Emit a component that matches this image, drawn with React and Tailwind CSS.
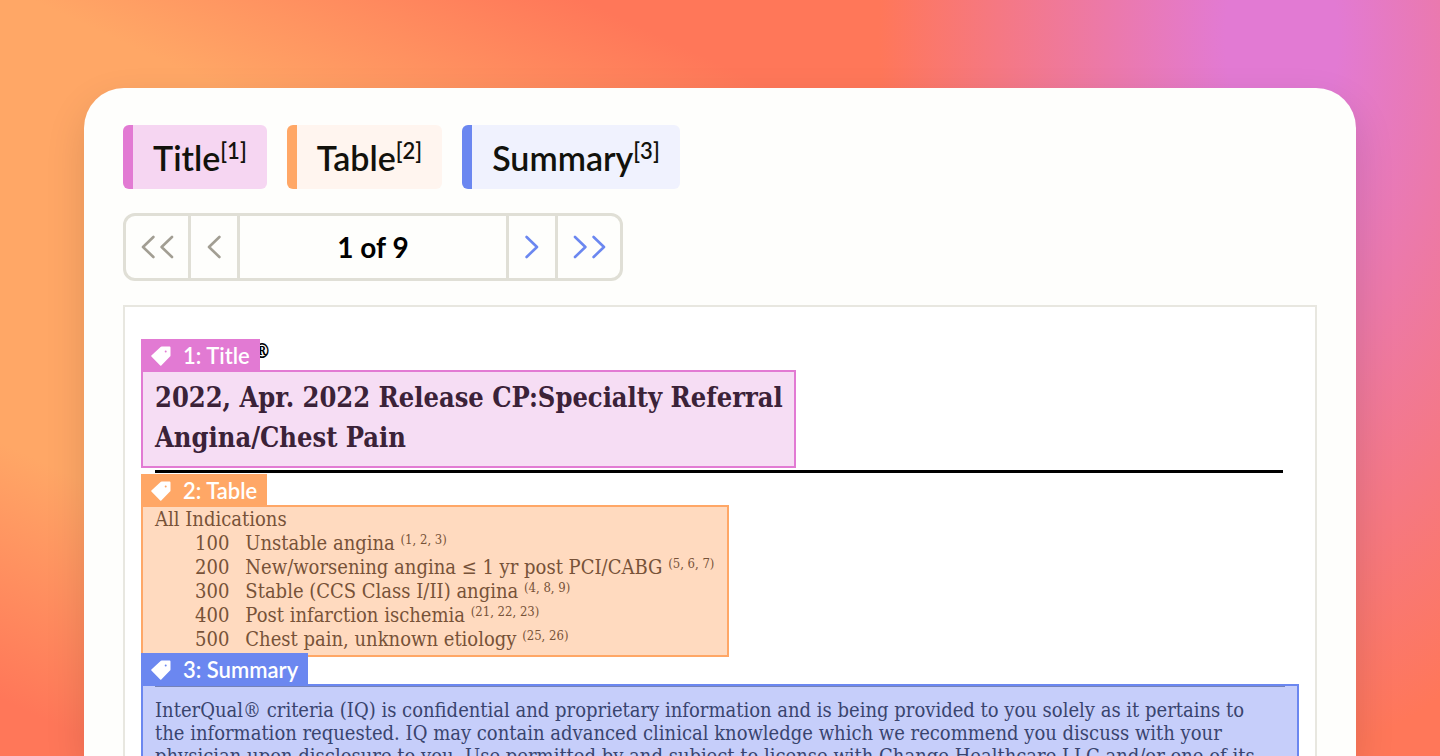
import clsx from "clsx";

const tabs = [
    { id: 1, name: "Title", bar: "border-[#e27ad3]", fill: "bg-[#f6d6f2]" },
    { id: 2, name: "Table", bar: "border-[#ffa766]", fill: "bg-[#fff5ef]" },
    { id: 3, name: "Summary", bar: "border-[#6b87f0]", fill: "bg-[#f0f2fe]" },
];

const indications = [
    { code: 100, text: "Unstable angina", refs: "(1, 2, 3)" },
    {
        code: 200,
        text: "New/worsening angina ≤ 1 yr post PCI/CABG",
        refs: "(5, 6, 7)",
    },
    { code: 300, text: "Stable (CCS Class I/II) angina", refs: "(4, 8, 9)" },
    { code: 400, text: "Post infarction ischemia", refs: "(21, 22, 23)" },
    { code: 500, text: "Chest pain, unknown etiology", refs: "(25, 26)" },
];

const summaryLines = [
    "InterQual® criteria (IQ) is confidential and proprietary information and is being provided to you solely as it pertains to",
    "the information requested. IQ may contain advanced clinical knowledge which we recommend you discuss with your",
    "physician upon disclosure to you. Use permitted by and subject to license with Change Healthcare LLC and/or one of its",
];

function Chevrons({ count = 1, flip = false }) {
    const width = count === 1 ? 14 : 33;
    return (
        <svg
            width={width}
            height="24"
            viewBox={`0 0 ${width} 24`}
            fill="none"
            stroke="currentColor"
            strokeWidth="2.6"
            strokeLinecap="round"
            strokeLinejoin="round"
            className={clsx(flip && "-scale-x-100")}
            aria-hidden="true"
        >
            <path d="M12.4 2 2 12l10.4 10" />
            {count === 2 && <path d="M31 2 20.6 12 31 22" />}
        </svg>
    );
}

function TagLabel({ className, children }) {
    return (
        <div
            className={clsx(
                "absolute bottom-full -left-0.5 flex h-[33px] items-center gap-3 px-2.5 font-[Lato,sans-serif] text-[22px] font-semibold whitespace-nowrap text-white",
                className
            )}
        >
            <svg width="20" height="20" viewBox="0 0 20 20" aria-hidden="true">
                <path
                    fill="currentColor"
                    fillRule="evenodd"
                    d="M9.6 .9a1.6 1.6 0 0 1 1.1-.4h7.9c.5 0 .9.4.9.9v8c0 .4-.2.9-.5 1.2l-8.700 8.800a.8.800 0 0 1-1.100 0L.4 10.500a.7.700 0 0 1 0-1ZM14.700 4.400a1 1 0 1 0 0 2 1 1 0 0 0 0-2Z"
                />
            </svg>
            {children}
        </div>
    );
}

function Pager() {
    return (
        <nav
            aria-label="Pages"
            className="mt-6 flex h-[68px] w-[500px] divide-x-3 divide-[#e0dfd6] rounded-xl border-3 border-[#e0dfd6] text-[#a29e93]"
        >
            <button
                aria-label="First page"
                className="flex w-[65px] items-center justify-center"
            >
                <Chevrons count={2} />
            </button>
            <button
                aria-label="Previous page"
                className="flex w-[49px] items-center justify-center"
            >
                <Chevrons />
            </button>
            <div className="flex flex-1 items-center justify-center text-[28px] font-bold text-black">
                1 of 9
            </div>
            <button
                aria-label="Next page"
                className="flex w-[49px] items-center justify-center text-[#6b87f0]"
            >
                <Chevrons flip />
            </button>
            <button
                aria-label="Last page"
                className="flex w-[62px] items-center justify-center text-[#6b87f0]"
            >
                <Chevrons count={2} flip />
            </button>
        </nav>
    );
}

export default function App() {
    return (
        <div className="h-screen overflow-hidden bg-[#ff7759] bg-[radial-gradient(ellipse_28%_95%_at_89%_5%,#e27ad3_0%,#e27ad3_14%,#e27ad300_100%),linear-gradient(90deg,#ff775900_55%,#ff7759_85%),linear-gradient(25deg,#ff7759_0%,#ff7759_4%,#ffa766_22%,#ffa766_54%,#ff7759_72%)] px-[84px] pt-[88px] font-[Lato,sans-serif]">
            <main className="h-full rounded-t-[40px] bg-[#fefefc] px-[39px] pt-[37px] shadow-[0_16px_40px_#0000001f]">
                <div className="flex gap-5">
                    {tabs.map((tab) => (
                        <button
                            key={tab.id}
                            className={clsx(
                                "flex h-16 items-center rounded-md border-l-10 px-5 text-[34px] font-semibold text-[#12120c]",
                                tab.bar,
                                tab.fill
                            )}
                        >
                            <span>
                                {tab.name}
                                <sup className="-top-3 text-[22px]">
                                    [{tab.id}]
                                </sup>
                            </span>
                        </button>
                    ))}
                </div>

                <Pager />

                <article className="mt-6 border-2 border-[#e8e7e0] bg-white px-4 pt-8 font-['DejaVu_Serif_Condensed','DejaVu_Serif',serif] text-black">
                    <p className="h-[31px] pl-28 text-xl leading-6 font-bold">
                        ®
                    </p>

                    <section className="relative w-[655px] border-2 border-[#e27ad3] bg-[#f6ddf4] px-3 pt-1.5 pb-2 text-[#3b2238]">
                        <TagLabel className="bg-[#e27ad3]">1: Title</TagLabel>
                        <h1 className="text-[27px] leading-10 font-bold whitespace-nowrap">
                            2022, Apr. 2022 Release CP:Specialty Referral
                            <br />
                            Angina/Chest Pain
                        </h1>
                    </section>

                    <hr className="mt-0.5 mr-4 ml-3.5 border-t-3 border-black" />

                    <section className="relative mt-8 w-[588px] border-2 border-[#ffa766] bg-[#ffdabf] px-3 pb-1 text-xl leading-6 text-[#775238]">
                        <TagLabel className="bg-[#ffa766]">2: Table</TagLabel>
                        <table className="whitespace-nowrap">
                            <caption className="text-left">
                                All Indications
                            </caption>
                            <tbody>
                                {indications.map((row) => (
                                    <tr key={row.code}>
                                        <th
                                            scope="row"
                                            className="pr-4 pl-10 font-normal"
                                        >
                                            {row.code}
                                        </th>
                                        <td>
                                            {row.text}{" "}
                                            <sup className="text-[13px] leading-none">
                                                {row.refs}
                                            </sup>
                                        </td>
                                    </tr>
                                ))}
                            </tbody>
                        </table>
                    </section>

                    <section className="relative mt-[27px] border-2 border-[#6b87f0] bg-[#c6cefa] px-3 text-xl leading-[23px] text-[#39446e]">
                        <TagLabel className="bg-[#6b87f0]">
                            3: Summary
                        </TagLabel>
                        <hr className="mb-3 border-[#7582b8]" />
                        {summaryLines.map((line) => (
                            <p key={line} className="whitespace-nowrap">
                                {line}
                            </p>
                        ))}
                    </section>
                </article>
            </main>
        </div>
    );
}
